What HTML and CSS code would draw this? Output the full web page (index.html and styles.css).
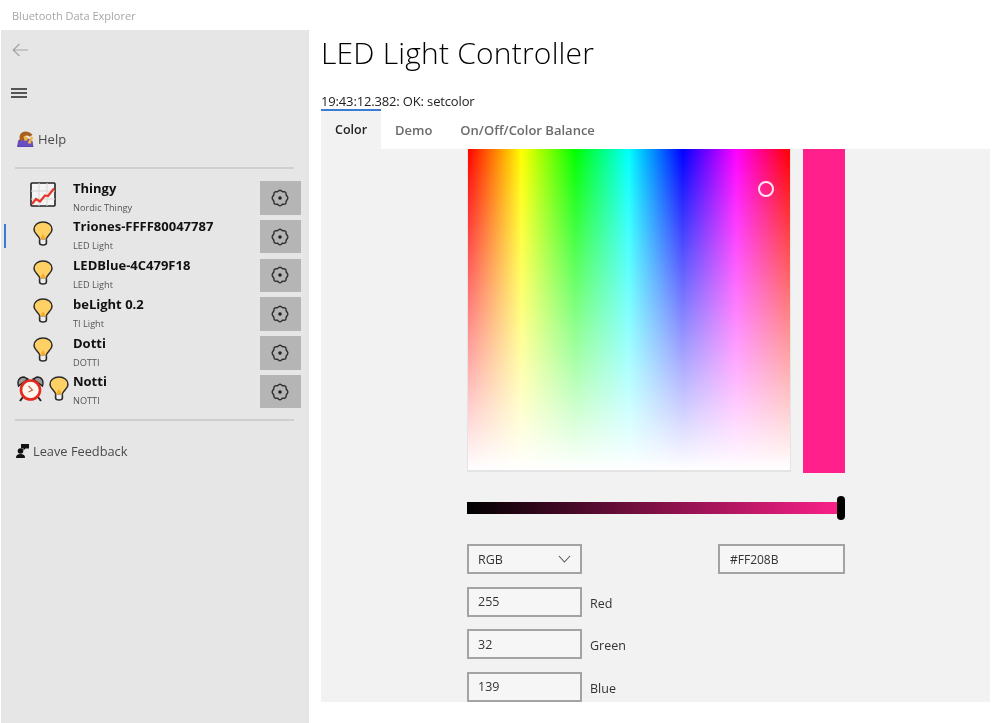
FILE: index.html
```html
<!DOCTYPE html>
<html lang="en">

<head>
    <meta charset="UTF-8">
    <title>Bluetooth Data Explorer</title>
    <link rel="stylesheet" href="styles.css">
</head>

<body>
    <svg class="defs" width="0" height="0">
        <symbol id="bulb" viewBox="0 0 20 25">
            <path d="M6.8 18.5C6.3 14.5 1 13 1 8.4C1 3.8 5 1 10 1C15 1 19 3.8 19 8.4C19 13 13.7 14.5 13.2 18.5Z" fill="#ffd063" stroke="#2a2a2a" stroke-width="1.5" />
            <path d="M6.8 18.5L10 13L13.2 18.5Z" fill="#f5ab2c" />
            <path d="M6.6 18.5V22C6.6 23.4 8 24 10 24C12 24 13.4 23.4 13.4 22V18.5" fill="#eee" stroke="#2a2a2a" stroke-width="1.6" />
        </symbol>
        <symbol id="gear" viewBox="0 0 18 18">
            <path d="M9 1.2C10.3 1.2 10.6 2.4 11.6 2.7C12.7 3 13.6 2.3 14.5 3.2C15.4 4.1 14.9 5.1 15.3 6.1C15.7 7.1 16.8 7.6 16.8 9C16.8 10.4 15.7 10.9 15.3 11.9C14.9 12.9 15.4 13.9 14.5 14.8C13.6 15.7 12.7 15 11.6 15.3C10.6 15.6 10.3 16.8 9 16.8C7.7 16.8 7.4 15.6 6.4 15.3C5.3 15 4.4 15.7 3.5 14.8C2.6 13.9 3.1 12.9 2.7 11.9C2.3 10.9 1.2 10.4 1.2 9C1.2 7.6 2.3 7.1 2.7 6.1C3.1 5.1 2.6 4.1 3.5 3.2C4.4 2.3 5.3 3 6.4 2.7C7.4 2.4 7.7 1.2 9 1.2Z" fill="none" stroke="#333" stroke-width="1.5" />
            <circle cx="9" cy="9" r="1.8" fill="#222" />
        </symbol>
    </svg>

    <div class="titlebar">Bluetooth Data Explorer</div>

    <div class="app">
        <!-- Left menu -->
        <div class="sidebar">
            <svg class="back-icon" width="16" height="14" viewBox="0 0 16 14">
                <path d="M7.5 1L1.2 7L7.5 13M1.2 7H16" fill="none" stroke="#a3a3a3" stroke-width="1.2" />
            </svg>
            <div class="burger">
                <span></span>
                <span></span>
                <span></span>
            </div>

            <div class="menu-link help-link">
                <svg width="17" height="16" viewBox="0 0 17 16">
                    <path d="M0.5 16L1.5 10C2 8.5 4 8 8 8C12 8 14.5 8.5 15 10L16 16Z" fill="#6a4fc4" stroke="#4b3590" stroke-width="0.7" />
                    <path d="M3 9C1.5 4.5 4 0.5 8.5 0.5C11 0.5 13 1.6 15.5 3.8L13 5.8C10.5 4.2 8.5 4.2 7.5 5.5L6.5 9.5L4 10Z" fill="#a8601c" />
                    <path d="M6.5 5.5C8.8 5 11 6 11 8C10.5 9.6 9 10 7.5 9.7Z" fill="#f2b33d" />
                    <path d="M10.5 12L14.2 5.5L16.2 6.6L13.5 13Z" fill="#f2b33d" />
                </svg>
                <span>Help</span>
            </div>

            <div class="divider divider-top"></div>

            <div class="device-list">
                <div class="device">
                    <div class="device-icons">
                        <svg width="26" height="25" viewBox="0 0 26 25">
                            <rect x="1" y="1" width="24" height="23" rx="1" fill="#f4f4f4" stroke="#222" stroke-width="1.6" />
                            <path d="M9 1V24M17 1V24M1 9H25M1 17H25" stroke="#d6d6d6" stroke-width="1" />
                            <path d="M2 22L6 17L10 19.5L15 13.5L18 14L24 6.5" fill="none" stroke="#e8372a" stroke-width="2.2" />
                        </svg>
                    </div>
                    <div class="device-text">
                        <div class="device-name">Thingy</div>
                        <div class="device-type">Nordic Thingy</div>
                    </div>
                    <div class="gear-btn"><svg width="18" height="18"><use href="#gear" /></svg></div>
                </div>
                <div class="device selected">
                    <div class="device-icons"><svg width="20" height="25"><use href="#bulb" /></svg></div>
                    <div class="device-text">
                        <div class="device-name">Triones-FFFF80047787</div>
                        <div class="device-type">LED Light</div>
                    </div>
                    <div class="gear-btn"><svg width="18" height="18"><use href="#gear" /></svg></div>
                </div>
                <div class="device">
                    <div class="device-icons"><svg width="20" height="25"><use href="#bulb" /></svg></div>
                    <div class="device-text">
                        <div class="device-name">LEDBlue-4C479F18</div>
                        <div class="device-type">LED Light</div>
                    </div>
                    <div class="gear-btn"><svg width="18" height="18"><use href="#gear" /></svg></div>
                </div>
                <div class="device">
                    <div class="device-icons"><svg width="20" height="25"><use href="#bulb" /></svg></div>
                    <div class="device-text">
                        <div class="device-name">beLight 0.2</div>
                        <div class="device-type">TI Light</div>
                    </div>
                    <div class="gear-btn"><svg width="18" height="18"><use href="#gear" /></svg></div>
                </div>
                <div class="device">
                    <div class="device-icons"><svg width="20" height="25"><use href="#bulb" /></svg></div>
                    <div class="device-text">
                        <div class="device-name">Dotti</div>
                        <div class="device-type">DOTTI</div>
                    </div>
                    <div class="gear-btn"><svg width="18" height="18"><use href="#gear" /></svg></div>
                </div>
                <div class="device">
                    <div class="device-icons">
                        <svg width="27" height="26" viewBox="0 0 27 26">
                            <path d="M1.5 10C0 5 2 1 7 1L11 3ZM25.5 10C27 5 25 1 20 1L16 3Z" fill="#9a9a9a" stroke="#222" stroke-width="1.4" />
                            <path d="M6 21L3 25M21 21L24 25" stroke="#222" stroke-width="2" />
                            <circle cx="13.5" cy="14" r="9.5" fill="#fff6ee" stroke="#e5281e" stroke-width="2.6" />
                            <path d="M11.5 10L15.5 14L11.5 16" fill="none" stroke="#c0604a" stroke-width="1.2" />
                        </svg>
                        <svg width="20" height="25"><use href="#bulb" /></svg>
                    </div>
                    <div class="device-text">
                        <div class="device-name">Notti</div>
                        <div class="device-type">NOTTI</div>
                    </div>
                    <div class="gear-btn"><svg width="18" height="18"><use href="#gear" /></svg></div>
                </div>
            </div>

            <div class="divider divider-bottom"></div>

            <div class="menu-link feedback-link">
                <svg width="13" height="15" viewBox="0 0 13 15">
                    <path d="M5 1H13V5.5H9.5L7.5 7.5V5.5H5Z" fill="#111" />
                    <circle cx="4.5" cy="8" r="2.8" fill="#111" />
                    <path d="M0 15C0 12 1.5 11 4.5 11C7.5 11 9 12 9 15Z" fill="#111" />
                </svg>
                <span>Leave Feedback</span>
            </div>
        </div>

        <!-- Main content -->
        <div class="main">
            <h1>LED Light Controller</h1>
            <div class="status">19:43:12.382: OK: setcolor</div>

            <div class="tabs">
                <div class="tab active">Color</div>
                <div class="tab">Demo</div>
                <div class="tab">On/Off/Color Balance</div>
            </div>

            <div class="tab-panel">
                <div class="picker">
                    <div class="spectrum">
                        <div class="spectrum-dot"></div>
                    </div>
                    <div class="preview"></div>
                </div>

                <div class="value-slider">
                    <div class="value-thumb"></div>
                </div>

                <div class="fields">
                    <div class="field-row between">
                        <div class="box select-box">
                            <span>RGB</span>
                            <svg width="13" height="8" viewBox="0 0 13 8">
                                <path d="M1 1L6.5 7L12 1" fill="none" stroke="#555" stroke-width="1.1" />
                            </svg>
                        </div>
                        <div class="box hex-box">#FF208B</div>
                    </div>
                    <div class="field-row">
                        <div class="box">255</div>
                        <span class="field-label">Red</span>
                    </div>
                    <div class="field-row">
                        <div class="box">32</div>
                        <span class="field-label">Green</span>
                    </div>
                    <div class="field-row">
                        <div class="box">139</div>
                        <span class="field-label">Blue</span>
                    </div>
                </div>
            </div>
        </div>
    </div>
</body>

</html>
```

FILE: styles.css
```css
* {
    box-sizing: border-box;
}

html,
body {
    height: 100%;
}

body {
    margin: 0;
    overflow: hidden;
    background-color: white;
    color: #222;
    font-family: "Open Sans", "Noto Sans", sans-serif;
    font-size: 13px;
    filter: blur(0.5px);
}

.defs {
    position: absolute;
}

.titlebar {
    height: 30px;
    padding: 8px 0 0 12px;
    color: #a6a6a6;
    font-size: 11px;
    line-height: 16px;
}

.app {
    display: flex;
    height: 693px;
}

/* Left menu */
.sidebar {
    width: 308px;
    margin-left: 1px;
    background-color: #e6e6e6;
    padding-top: 13px;
}

.back-icon {
    display: block;
    margin-left: 11px;
}

.burger {
    display: flex;
    flex-direction: column;
    gap: 2px;
    width: 16px;
    margin: 31px 0 0 10px;
}

.burger span {
    height: 2px;
    background-color: #555;
}

.menu-link {
    display: flex;
    align-items: center;
    color: #4a4a4a;
    font-size: 13px;
}

.help-link {
    gap: 4px;
    margin: 32px 0 0 16px;
}

.feedback-link {
    gap: 4px;
    margin: 21px 0 0 15px;
    font-size: 12.8px;
}

.divider {
    height: 2px;
    margin-left: 14px;
    width: 279px;
    background-color: #cfcfcf;
}

.divider-top {
    margin-top: 19px;
}

.divider-bottom {
    margin-top: 5px;
}

.device-list {
    margin-top: 12px;
}

.device {
    display: flex;
    position: relative;
    height: 38.75px;
}

.device.selected::before {
    content: "";
    position: absolute;
    left: 3px;
    top: 4px;
    width: 2px;
    height: 24px;
    background-color: #3a7bd5;
}

.device-icons {
    display: flex;
    justify-content: center;
    gap: 5px;
    width: 56px;
    margin: 1px 2px 0 14px;
}

.device-text {
    flex: 1;
    margin-top: -1.4px;
}

.device-name {
    color: #111;
    font-size: 13px;
    font-weight: 700;
    line-height: 16px;
}

.device-type {
    margin-top: 6px;
    color: #555;
    font-size: 9.2px;
    line-height: 12px;
}

.gear-btn {
    display: flex;
    align-items: center;
    justify-content: center;
    width: 41px;
    height: 33.5px;
    margin-right: 8px;
    padding-right: 2px;
    background-color: #b5b5b5;
}

/* Main content */
.main {
    flex: 1;
    padding: 0 10px 22px 12px;
    display: flex;
    flex-direction: column;
}

h1 {
    margin: 4px 0 0;
    color: #000;
    font-size: 30px;
    font-weight: 300;
    letter-spacing: 0.2px;
    line-height: 38px;
}

.status {
    margin-top: 20px;
    letter-spacing: -0.15px;
    line-height: 18px;
}

.tabs {
    display: flex;
}

.tab {
    height: 39px;
    padding: 11px 14px 0;
    color: #6b6b6b;
    font-weight: 600;
    font-size: 13px;
    line-height: 18px;
}

.tab.active {
    width: 60px;
    margin-top: -1px;
    height: 40px;
    border-top: 2px solid #3a7bd5;
    background-color: #f2f2f2;
    color: #222;
    padding-top: 10px;
    font-size: 12.5px;
}

.tab-panel {
    flex: 1;
    padding-left: 146px;
    background-color: #f2f2f2;
}

.picker {
    display: flex;
    gap: 12px;
    width: 378px;
}

.spectrum {
    position: relative;
    width: 324px;
    height: 323px;
    border: solid #e4e4e4;
    border-width: 0 1px 2px 1px;
    background-image: linear-gradient(to bottom, rgba(255, 255, 255, 0), white),
        linear-gradient(to right, #f00, #ff0, #0f0, #0ff, #00f, #f0f, #f00);
}

.spectrum-dot {
    position: absolute;
    left: 290px;
    top: 32px;
    width: 16px;
    height: 16px;
    border: 2px solid #ffe6f2;
    border-radius: 50%;
}

.preview {
    width: 42px;
    height: 324px;
    background-color: #ff208b;
}

.value-slider {
    position: relative;
    width: 378px;
    height: 12px;
    margin-top: 29px;
    background-image: linear-gradient(to right, black, #ff208b);
}

.value-thumb {
    position: absolute;
    right: 0;
    top: -6px;
    width: 8px;
    height: 24px;
    border-radius: 4px;
    background-color: black;
}

.fields {
    display: flex;
    flex-direction: column;
    gap: 12.5px;
    width: 378px;
    margin-top: 30px;
}

.field-row {
    display: flex;
    align-items: center;
}

.between {
    justify-content: space-between;
}

.box {
    display: flex;
    align-items: center;
    width: 115px;
    height: 30px;
    padding-left: 9px;
    border: 2px solid #a3a3a3;
    background-color: #f6f6f6;
    color: #333;
    font-size: 12.5px;
}

.select-box {
    justify-content: space-between;
    padding-right: 9px;
}

.hex-box {
    width: 127px;
    padding-left: 10px;
    font-size: 12px;
}

.field-label {
    margin: 3px 0 0 8px;
    color: #333;
    font-size: 12.5px;
}
```
